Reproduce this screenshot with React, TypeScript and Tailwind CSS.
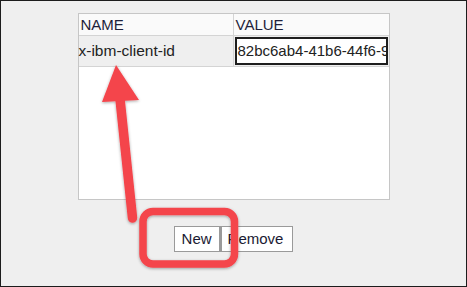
import React from 'react';

const font = { fontFamily: '"Liberation Sans", Arial, sans-serif' };

function Callout() {
  return (
    <svg className="absolute inset-0 pointer-events-none" width="467" height="287" viewBox="0 0 467 287">
      <defs>
        <filter id="shadow" x="-20%" y="-20%" width="140%" height="140%">
          <feDropShadow dx="0" dy="1" stdDeviation="1.5" floodColor="#000" floodOpacity="0.35" />
        </filter>
      </defs>
      <g filter="url(#shadow)" fill="#f4444b" stroke="#f4444b">
        <line x1="119" y1="98" x2="131.5" y2="217" strokeWidth="9.5" strokeLinecap="round" />
        <polygon points="115,64 101,101 138,99" stroke="none" />
        <rect x="142" y="210.5" width="91.5" height="52.5" rx="10" fill="none" strokeWidth="7.5" />
      </g>
    </svg>
  );
}

export default function App() {
  return (
    <div
      className="relative w-[467px] h-[287px] bg-[#efefef] border border-[#1c1c1c] overflow-hidden text-[#222]"
      style={font}
    >
      <div className="flex flex-col items-center pt-[12px] pl-[76px] pr-[76px]">
        <div className="w-[312px] h-[187px] bg-white border border-[#c6c6c6] flex flex-col">
          <div className="flex h-[22px] bg-[#fafafa] border-b border-[#d4d4d4] text-[15px] leading-[22px]">
            <div className="w-[155px] shrink-0 px-[2px] border-r border-[#d4d4d4] text-[#1f1f3a]">NAME</div>
            <div className="flex-1 min-w-0 px-[2px] text-[#1f1f3a]">VALUE</div>
          </div>
          <div className="flex h-[31px] border-b border-[#d4d4d4] text-[15.5px]">
            <div className="w-[155px] shrink-0 bg-[#efefef] border-r border-[#d4d4d4] flex items-center">
              x-ibm-client-id
            </div>
            <div className="flex-1 min-w-0 flex items-center pl-[1px] pr-[1px] py-[1px] bg-[#efefef]">
              <div className="w-full h-full bg-white border-2 border-[#1e1e1e] flex items-center pl-[1px] overflow-hidden whitespace-nowrap text-[15px]">
                82bc6ab4-41b6-44f6-9a4d
              </div>
            </div>
          </div>
          <div className="flex-1 bg-white" />
        </div>
        <div className="flex mt-[26px] text-[15px] text-[#1a1a33]">
          <button className="h-[26px] px-[7px] bg-white border border-[#9a9a9a]">New</button>
          <button className="h-[26px] pl-[6px] pr-[9px] bg-white border border-[#9a9a9a] border-l-[2px]">Remove</button>
        </div>
      </div>
      <Callout />
    </div>
  );
}
